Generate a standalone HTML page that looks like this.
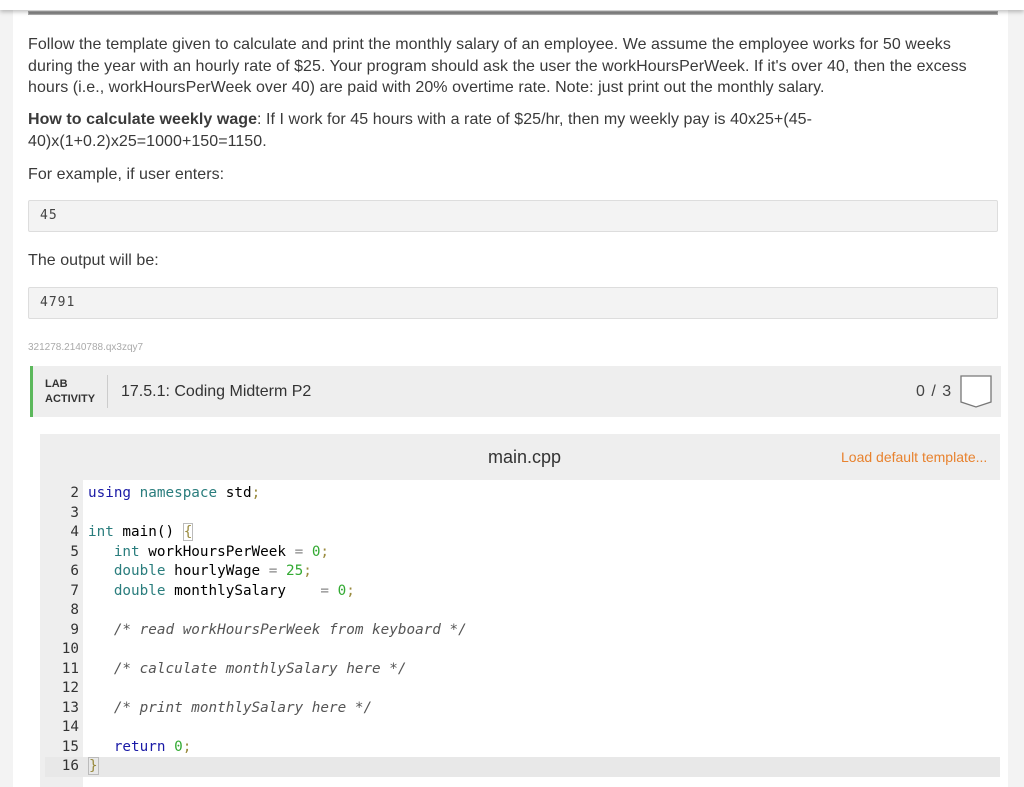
<!DOCTYPE html>
<html><head><style>
body{margin:0;width:1024px;height:787px;overflow:hidden;background:#f3f3f3;font-family:"Liberation Sans",sans-serif;color:#3a3a3a;position:relative}
.top{position:absolute;left:0;top:0;width:1024px;height:10px;background:#fff;box-shadow:0 2px 4px rgba(0,0,0,.25);z-index:2}
.main{position:absolute;left:13px;top:0;width:995px;height:787px;background:#fff}
.bar{position:absolute;left:28px;top:11px;width:970px;height:4px;background:#888;border:1px solid #aaa;box-sizing:border-box}
p{position:absolute;left:28px;margin:0;font-size:16px;line-height:21.5px;width:966px;letter-spacing:0.05px}
.box{position:absolute;left:28px;width:970px;height:32px;background:#f3f3f3;border:1px solid #ddd;box-sizing:border-box;border-radius:2px;font-family:"DejaVu Sans Mono",monospace;font-size:13px;color:#444;padding:7px 0 0 11px;letter-spacing:1px}
.card{position:absolute;left:30px;top:366px;width:971px;height:421px;background:#fff}
.hdr{position:absolute;left:0;top:0;width:971px;height:51px;background:#eee;border-left:3px solid #5cb85c;box-sizing:border-box}
.ed{position:absolute;left:40px;top:434px;width:960px;height:353px;background:#eee}
.code{position:absolute;left:45px;top:480px;width:955px;height:307px;background:#fff}
.gut{position:absolute;left:0;top:0;width:38px;height:307px;background:#eee}
pre{position:absolute;left:0;top:4px;margin:0;font-family:"DejaVu Sans Mono",monospace;font-size:14.3px;line-height:19.5px;color:#000}
.ln{display:inline-block;width:34px;text-align:right;color:#333;margin-right:9px}
.k{color:#1a1aa6}.t{color:#2a7d7d}.n{color:#3a3}.c{color:#555;font-style:italic}.p{color:#998a3d}
</style></head><body>
<div class="main"></div>
<div class="top"></div>
<div class="bar"></div>
<p style="top:34px">Follow the template given to calculate and print the monthly salary of an employee. We assume the employee works for 50 weeks during the year with an hourly rate of $25. Your program should ask the user the workHoursPerWeek. If it's over 40, then the excess hours (i.e., workHoursPerWeek over 40) are paid with 20% overtime rate. Note: just print out the monthly salary.</p>
<p style="top:109px;width:790px"><b>How to calculate weekly wage</b>: If I work for 45 hours with a rate of $25/hr, then my weekly pay is 40x25+(45-40)x(1+0.2)x25=1000+150=1150.</p>
<p style="top:164px">For example, if user enters:</p>
<div class="box" style="top:200px">45</div>
<p style="top:250px">The output will be:</p>
<div class="box" style="top:287px">4791</div>
<p style="top:337px;font-size:10px;color:#aaa;letter-spacing:0">321278.2140788.qx3zqy7</p>
<div class="card"><div class="hdr">
<div style="position:absolute;left:12px;top:11px;font-size:11px;font-weight:bold;line-height:15px;color:#333">LAB<br>ACTIVITY</div>
<div style="position:absolute;left:74px;top:9px;width:1px;height:33px;background:#ccc"></div>
<div style="position:absolute;left:88px;top:17px;font-size:16px;color:#333">17.5.1: Coding Midterm P2</div>
<div style="position:absolute;left:883px;top:17px;font-size:16px;color:#444;letter-spacing:1px">0 / 3</div>
<svg style="position:absolute;left:926px;top:9px" width="34" height="34"><path d="M2 1H32V27L17 32L2 27Z" fill="#fff" stroke="#777" stroke-width="1.3"/></svg>
</div></div>
<div class="ed">
<div style="position:absolute;left:448px;top:13px;font-size:18px;color:#333">main.cpp</div>
<div style="position:absolute;left:801px;top:15px;font-size:14px;color:#e8822e">Load default template...</div>
</div>
<div class="code"><div class="gut"></div>
<div style="position:absolute;left:0;top:277px;width:955px;height:20px;background:#e8e8e8"></div>
<pre><span class="ln">2</span><span class="k">using</span> <span class="t">namespace</span> std<span class="p">;</span>
<span class="ln">3</span>
<span class="ln">4</span><span class="t">int</span> main() <span style="border:1px solid #bbb;color:#998a3d">{</span>
<span class="ln">5</span>   <span class="t">int</span> workHoursPerWeek <span style="color:#888">=</span> <span class="n">0</span><span class="p">;</span>
<span class="ln">6</span>   <span class="t">double</span> hourlyWage <span style="color:#888">=</span> <span class="n">25</span><span class="p">;</span>
<span class="ln">7</span>   <span class="t">double</span> monthlySalary    <span style="color:#888">=</span> <span class="n">0</span><span class="p">;</span>
<span class="ln">8</span>
<span class="ln">9</span>   <span class="c">/* read workHoursPerWeek from keyboard */</span>
<span class="ln">10</span>
<span class="ln">11</span>   <span class="c">/* calculate monthlySalary here */</span>
<span class="ln">12</span>
<span class="ln">13</span>   <span class="c">/* print monthlySalary here */</span>
<span class="ln">14</span>
<span class="ln">15</span>   <span class="k">return</span> <span class="n">0</span><span class="p">;</span>
<span class="ln">16</span><span style="border:1px solid #bbb;color:#998a3d">}</span></pre>
</div>
</body></html>
